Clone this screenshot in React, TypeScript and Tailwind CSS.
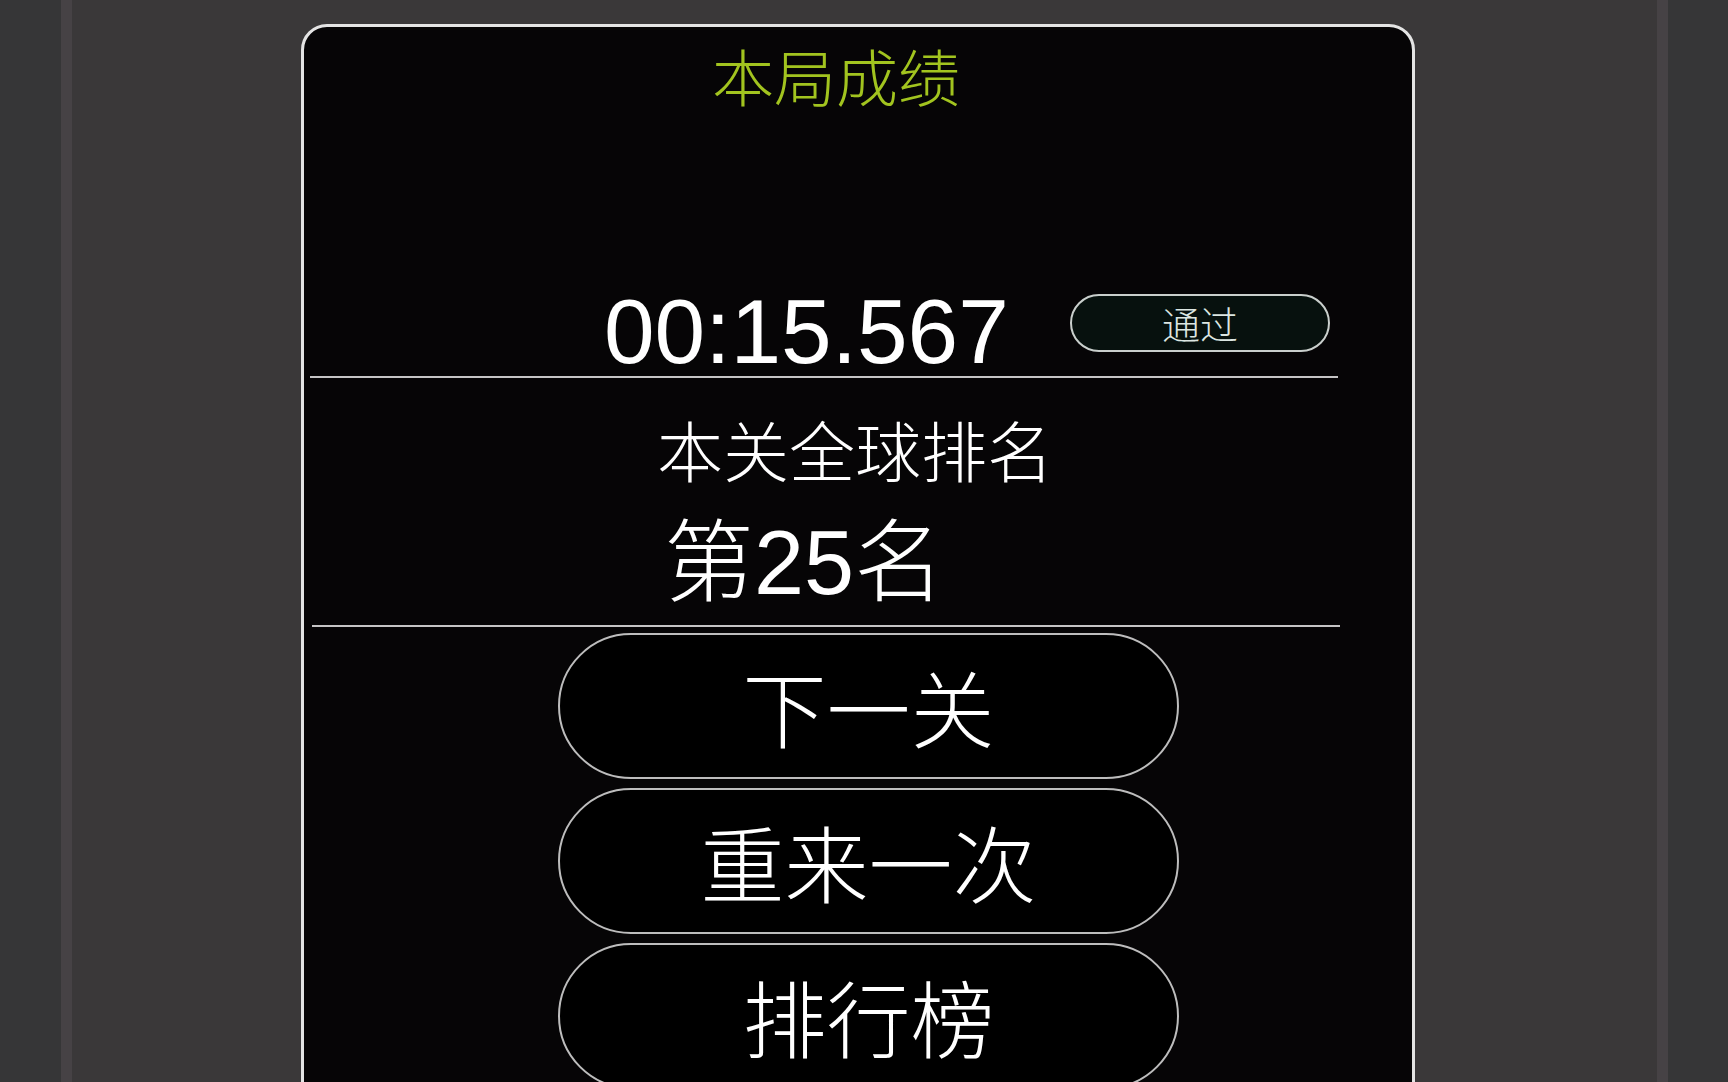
const cjk = "font-['Noto_Sans_CJK_SC','Noto_Sans',sans-serif] font-light";
const mixed = "font-['Liberation_Sans','Noto_Sans_CJK_SC',sans-serif]";

function PillButton({ label }: { label: string }) {
  return (
    <button className="flex h-[146px] w-[621px] items-center justify-center rounded-full border-2 border-[#bdbdbd] bg-black">
      <span className={`${cjk} text-[84px] leading-none text-white`}>{label}</span>
    </button>
  );
}

function ResultCard() {
  return (
    <div className="h-[1120px] w-[1114px] rounded-[26px] border-[3px] border-[#e4e4e4] bg-[#060506]">
      {/* title */}
      <div className={`${cjk} mt-[17px] pl-[408px] text-[62px] leading-none text-[#a2c41f]`}>本局成绩</div>

      {/* time + status */}
      <div className="mt-[180px] flex h-[90px] items-start pl-[300px]">
        <span className="w-[466px] font-['Liberation_Sans',sans-serif] text-[91px] leading-none text-white">
          00:15.567
        </span>
        <span className="mt-[8px] flex h-[58px] w-[260px] items-center justify-center rounded-full border-2 border-[#c9cfcc] bg-[#07110e]">
          <span className={`${cjk} text-[38px] leading-none text-[#dce6e2]`}>通过</span>
        </span>
      </div>
      <div className="ml-[6px] h-[2px] w-[1028px] bg-[#c4c4c4]" />

      {/* ranking */}
      <div className={`${cjk} mt-[37px] pl-[353px] text-[66px] leading-none text-white`}>本关全球排名</div>
      <div className={`${mixed} font-light mt-[37px] pl-[360px] text-[90px] leading-none text-white`}>第25名</div>
      <div className="ml-[8px] mt-[17px] h-[2px] w-[1028px] bg-[#c4c4c4]" />

      {/* actions */}
      <div className="mt-[6px] flex flex-col gap-[9px] pl-[254px]">
        <PillButton label="下一关" />
        <PillButton label="重来一次" />
        <PillButton label="排行榜" />
      </div>
    </div>
  );
}

export default function App() {
  return (
    <div className="flex h-[1082px] w-full overflow-hidden bg-[#363637]">
      <div className="w-[61px] shrink-0" />
      <div className="w-[11px] shrink-0 bg-[#464245]" />
      <div className="flex-1 bg-[#3a3839] pl-[229px] pt-[24px]">
        <ResultCard />
      </div>
      <div className="w-[11px] shrink-0 bg-[#464245]" />
      <div className="w-[60px] shrink-0" />
    </div>
  );
}
